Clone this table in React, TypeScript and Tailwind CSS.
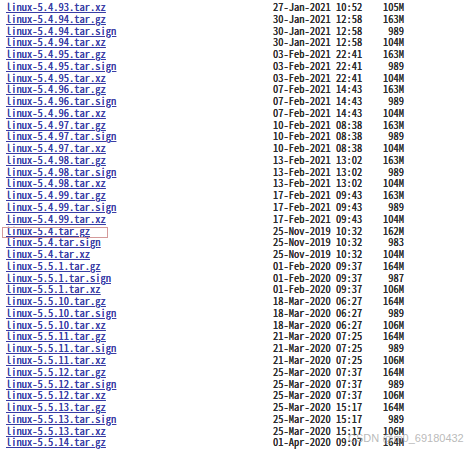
import React from 'react';

type Entry = { name: string; date: string; size: string };

const rows: Entry[] = [
  { name: 'linux-5.4.93.tar.xz', date: '27-Jan-2021 10:52', size: '105M' },
  { name: 'linux-5.4.94.tar.gz', date: '30-Jan-2021 12:58', size: '163M' },
  { name: 'linux-5.4.94.tar.sign', date: '30-Jan-2021 12:58', size: '989' },
  { name: 'linux-5.4.94.tar.xz', date: '30-Jan-2021 12:58', size: '104M' },
  { name: 'linux-5.4.95.tar.gz', date: '03-Feb-2021 22:41', size: '163M' },
  { name: 'linux-5.4.95.tar.sign', date: '03-Feb-2021 22:41', size: '989' },
  { name: 'linux-5.4.95.tar.xz', date: '03-Feb-2021 22:41', size: '104M' },
  { name: 'linux-5.4.96.tar.gz', date: '07-Feb-2021 14:43', size: '163M' },
  { name: 'linux-5.4.96.tar.sign', date: '07-Feb-2021 14:43', size: '989' },
  { name: 'linux-5.4.96.tar.xz', date: '07-Feb-2021 14:43', size: '104M' },
  { name: 'linux-5.4.97.tar.gz', date: '10-Feb-2021 08:38', size: '163M' },
  { name: 'linux-5.4.97.tar.sign', date: '10-Feb-2021 08:38', size: '989' },
  { name: 'linux-5.4.97.tar.xz', date: '10-Feb-2021 08:38', size: '104M' },
  { name: 'linux-5.4.98.tar.gz', date: '13-Feb-2021 13:02', size: '163M' },
  { name: 'linux-5.4.98.tar.sign', date: '13-Feb-2021 13:02', size: '989' },
  { name: 'linux-5.4.98.tar.xz', date: '13-Feb-2021 13:02', size: '104M' },
  { name: 'linux-5.4.99.tar.gz', date: '17-Feb-2021 09:43', size: '163M' },
  { name: 'linux-5.4.99.tar.sign', date: '17-Feb-2021 09:43', size: '989' },
  { name: 'linux-5.4.99.tar.xz', date: '17-Feb-2021 09:43', size: '104M' },
  { name: 'linux-5.4.tar.gz', date: '25-Nov-2019 10:32', size: '162M' },
  { name: 'linux-5.4.tar.sign', date: '25-Nov-2019 10:32', size: '983' },
  { name: 'linux-5.4.tar.xz', date: '25-Nov-2019 10:32', size: '104M' },
  { name: 'linux-5.5.1.tar.gz', date: '01-Feb-2020 09:37', size: '164M' },
  { name: 'linux-5.5.1.tar.sign', date: '01-Feb-2020 09:37', size: '987' },
  { name: 'linux-5.5.1.tar.xz', date: '01-Feb-2020 09:37', size: '106M' },
  { name: 'linux-5.5.10.tar.gz', date: '18-Mar-2020 06:27', size: '164M' },
  { name: 'linux-5.5.10.tar.sign', date: '18-Mar-2020 06:27', size: '989' },
  { name: 'linux-5.5.10.tar.xz', date: '18-Mar-2020 06:27', size: '106M' },
  { name: 'linux-5.5.11.tar.gz', date: '21-Mar-2020 07:25', size: '164M' },
  { name: 'linux-5.5.11.tar.sign', date: '21-Mar-2020 07:25', size: '989' },
  { name: 'linux-5.5.11.tar.xz', date: '21-Mar-2020 07:25', size: '106M' },
  { name: 'linux-5.5.12.tar.gz', date: '25-Mar-2020 07:37', size: '164M' },
  { name: 'linux-5.5.12.tar.sign', date: '25-Mar-2020 07:37', size: '989' },
  { name: 'linux-5.5.12.tar.xz', date: '25-Mar-2020 07:37', size: '106M' },
  { name: 'linux-5.5.13.tar.gz', date: '25-Mar-2020 15:17', size: '164M' },
  { name: 'linux-5.5.13.tar.sign', date: '25-Mar-2020 15:17', size: '989' },
  { name: 'linux-5.5.13.tar.xz', date: '25-Mar-2020 15:17', size: '106M' },
  { name: 'linux-5.5.14.tar.gz', date: '01-Apr-2020 09:07', size: '164M' },
];

export default function App() {
  return (
    <div className="relative w-[474px] h-[450px] overflow-hidden bg-white">
      <div
        className="pt-[1px] pl-[6px] text-[10.5px] leading-[11.78px] [text-shadow:0_0_0.2px_currentColor]"
        style={{ fontFamily: '"Noto Sans Mono CJK SC", "Liberation Mono", monospace' }}
      >
        {rows.map((row) => (
          <div key={row.name} className="relative flex h-[11.78px] whitespace-pre">
            <div className="w-[267px]">
              <a href="#" className="text-[#383ca4] underline underline-offset-1">
                {row.name}
              </a>
            </div>
            <div className="w-[90px] text-[#2a2a2a]">{row.date}</div>
            <div className="w-[41px] text-right text-[#2a2a2a]">{row.size}</div>
            {/* red box drawn around the 5.4 tarball */}
            {row.name === 'linux-5.4.tar.gz' && (
              <div className="absolute left-[-4px] top-[2px] w-[106px] h-[11px] border border-[#d49a9a]" />
            )}
          </div>
        ))}
      </div>

      {/* watermark */}
      <div
        className="absolute left-[348px] top-[431px] text-[11px] leading-[14px] text-[#a8a8a8]/80"
        style={{ fontFamily: '"Liberation Sans", Arial, sans-serif' }}
      >
        CSDN @m0_69180432
      </div>
    </div>
  );
}
